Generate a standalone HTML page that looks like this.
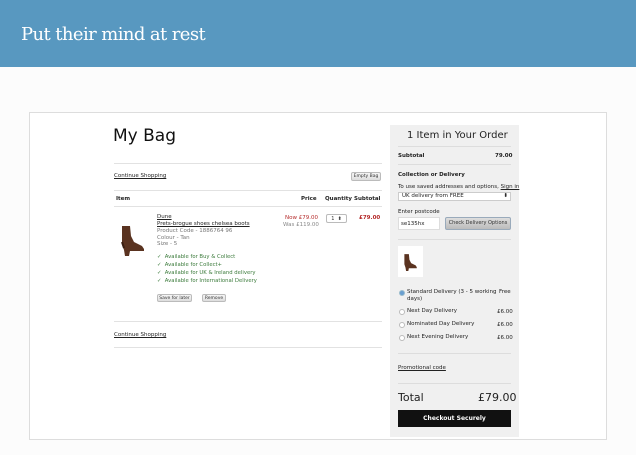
<!DOCTYPE html>
<html><head><meta charset="utf-8"><style>
*{margin:0;padding:0;box-sizing:border-box}
body{width:636px;height:455px;background:#fcfcfc;position:relative;overflow:hidden;font-family:"DejaVu Sans","Liberation Sans",sans-serif;color:#222}
.a{position:absolute;white-space:nowrap}
.hdr{left:0;top:0;width:636px;height:67px;background:#5898c0}
.t{font-family:"DejaVu Serif","Liberation Serif",serif;color:#fff;font-size:18px;left:21px;top:24px;letter-spacing:-0.6px}
.frame{left:29px;top:112px;width:578px;height:328px;border:1px solid #ddd;background:#fff}
.hr{height:1px;background:#e2e2e2}
.s{font-size:5.5px}
.u{text-decoration:underline}
.btn{border:1px solid #bbb;background:linear-gradient(#f6f6f6,#ddd);border-radius:2px;font-size:4.5px;text-align:center;color:#333}
.g{color:#3a7a3a;font-size:5.3px}
.r{color:#b52a2a}
.side{left:390px;top:125px;width:129px;height:312px;background:#f0f0f0}
.rad{width:6px;height:6px;border-radius:50%;border:1px solid #bbb;background:#fff}
</style></head><body>
<div class="a hdr"></div>
<div class="a t">Put their mind at rest</div>
<div class="a frame"></div>
<div class="a" style="left:113px;top:126px;font-size:17px;color:#111">My Bag</div>
<div class="a hr" style="left:114px;top:163px;width:268px"></div>
<div class="a s u" style="left:114px;top:173px">Continue Shopping</div>
<div class="a btn" style="left:351px;top:172px;width:30px;height:9px;line-height:8px">Empty Bag</div>
<div class="a hr" style="left:114px;top:190px;width:268px"></div>
<div class="a s" style="left:116px;top:196px;font-weight:bold">Item</div>
<div class="a s" style="left:301px;top:196px;font-weight:bold">Price</div>
<div class="a s" style="left:325px;top:196px;font-weight:bold">Quantity</div>
<div class="a s" style="left:354px;top:196px;font-weight:bold">Subtotal</div>
<div class="a hr" style="left:114px;top:206px;width:268px"></div>
<svg class="a" style="left:116px;top:224px" width="32" height="32" viewBox="0 0 32 32"><path d="M6 2h8l1 10 3 6 8 4 2 3v2H14l-1 5H9l-1-6-2-6z" fill="#5a3320"/><path d="M6 18l2 6" stroke="#3a1f12" stroke-width="2"/></svg>
<div class="a s u" style="left:157px;top:214px">Dune</div>
<div class="a s u" style="left:157px;top:221px">Prets-brogue shoes chelsea boots</div>
<div class="a s" style="left:157px;top:228px;color:#777">Product Code - 1886764 96</div>
<div class="a s" style="left:157px;top:235px;color:#777">Colour -  Tan</div>
<div class="a s" style="left:157px;top:241px;color:#777">Size -  5</div>
<div class="a g" style="left:157px;top:254px">✓&nbsp; Available for Buy &amp; Collect</div>
<div class="a g" style="left:157px;top:262px">✓&nbsp; Available for Collect+</div>
<div class="a g" style="left:157px;top:270px">✓&nbsp; Available for UK &amp; Ireland delivery</div>
<div class="a g" style="left:157px;top:278px">✓&nbsp; Available for International Delivery</div>
<div class="a btn" style="left:157px;top:294px;width:35px;height:8px;line-height:7px">Save for later</div>
<div class="a btn" style="left:202px;top:294px;width:24px;height:8px;line-height:7px">Remove</div>
<div class="a s r" style="left:285px;top:215px">Now £79.00</div>
<div class="a s" style="left:283px;top:222px;color:#888">Was £119.00</div>
<div class="a btn" style="left:326px;top:214px;width:21px;height:9px;line-height:8px;background:#fff;font-size:5px">1 &nbsp;⬍</div>
<div class="a s r" style="left:359px;top:215px;font-weight:bold">£79.00</div>
<div class="a hr" style="left:114px;top:321px;width:268px"></div>
<div class="a s u" style="left:114px;top:332px">Continue Shopping</div>
<div class="a hr" style="left:114px;top:347px;width:268px"></div>

<div class="a side"></div>
<div class="a" style="left:407px;top:130px;font-size:10px">1 Item in Your Order</div>
<div class="a hr" style="left:398px;top:146px;width:113px;background:#ddd"></div>
<div class="a s" style="left:398px;top:153px;font-weight:bold">Subtotal</div>
<div class="a s" style="left:495px;top:153px;font-weight:bold">79.00</div>
<div class="a hr" style="left:398px;top:164px;width:113px;background:#ddd"></div>
<div class="a s" style="left:398px;top:172px;font-weight:bold">Collection or Delivery</div>
<div class="a s" style="left:398px;top:184px">To use saved addresses and options, <span class="u">Sign in</span></div>
<div class="a s" style="left:398px;top:192px;width:113px;height:9px;background:#fff;border:1px solid #ccc;padding-left:3px;line-height:7px">UK delivery from FREE<span style="float:right;padding-right:2px">⬍</span></div>
<div class="a s" style="left:398px;top:209px">Enter postcode</div>
<div class="a s" style="left:398px;top:217px;width:42px;height:13px;background:#fff;border:1px solid #ddd;padding:3px 2px">se135hx</div>
<div class="a btn" style="left:445px;top:217px;width:66px;height:13px;line-height:11px;border-color:#9ab;background:linear-gradient(#ddd,#bbb);font-size:5px">Check Delivery Options</div>
<div class="a hr" style="left:398px;top:239px;width:113px;background:#ddd"></div>
<div class="a" style="left:398px;top:246px;width:25px;height:31px;background:#fff"></div>
<svg class="a" style="left:401px;top:253px" width="18" height="18" viewBox="0 0 32 32"><path d="M6 2h8l1 10 3 6 8 4 2 3v2H14l-1 5H9l-1-6-2-6z" fill="#5a3320"/></svg>
<div class="a rad" style="left:399px;top:290px;background:#6a9fd0;border-color:#9bc"></div>
<div class="a s" style="left:407px;top:289px">Standard Delivery (3 - 5 working</div>
<div class="a s" style="left:407px;top:296px">days)</div>
<div class="a s" style="left:499px;top:289px">Free</div>
<div class="a rad" style="left:399px;top:309px"></div><div class="a s" style="left:407px;top:308px">Next Day Delivery</div><div class="a s" style="left:497px;top:309px">£6.00</div>
<div class="a rad" style="left:399px;top:322px"></div><div class="a s" style="left:407px;top:321px">Nominated Day Delivery</div><div class="a s" style="left:497px;top:322px">£6.00</div>
<div class="a rad" style="left:399px;top:335px"></div><div class="a s" style="left:407px;top:334px">Next Evening Delivery</div><div class="a s" style="left:497px;top:335px">£6.00</div>
<div class="a hr" style="left:398px;top:353px;width:113px;background:#ddd"></div>
<div class="a s u" style="left:398px;top:365px">Promotional code</div>
<div class="a hr" style="left:398px;top:383px;width:113px;background:#ddd"></div>
<div class="a" style="left:398px;top:391px;font-size:11px">Total</div>
<div class="a" style="left:478px;top:391px;font-size:11px">£79.00</div>
<div class="a" style="left:398px;top:410px;width:113px;height:17px;background:#111;color:#fff;font-size:6px;font-weight:bold;text-align:center;line-height:17px">Checkout Securely</div>
</body></html>
